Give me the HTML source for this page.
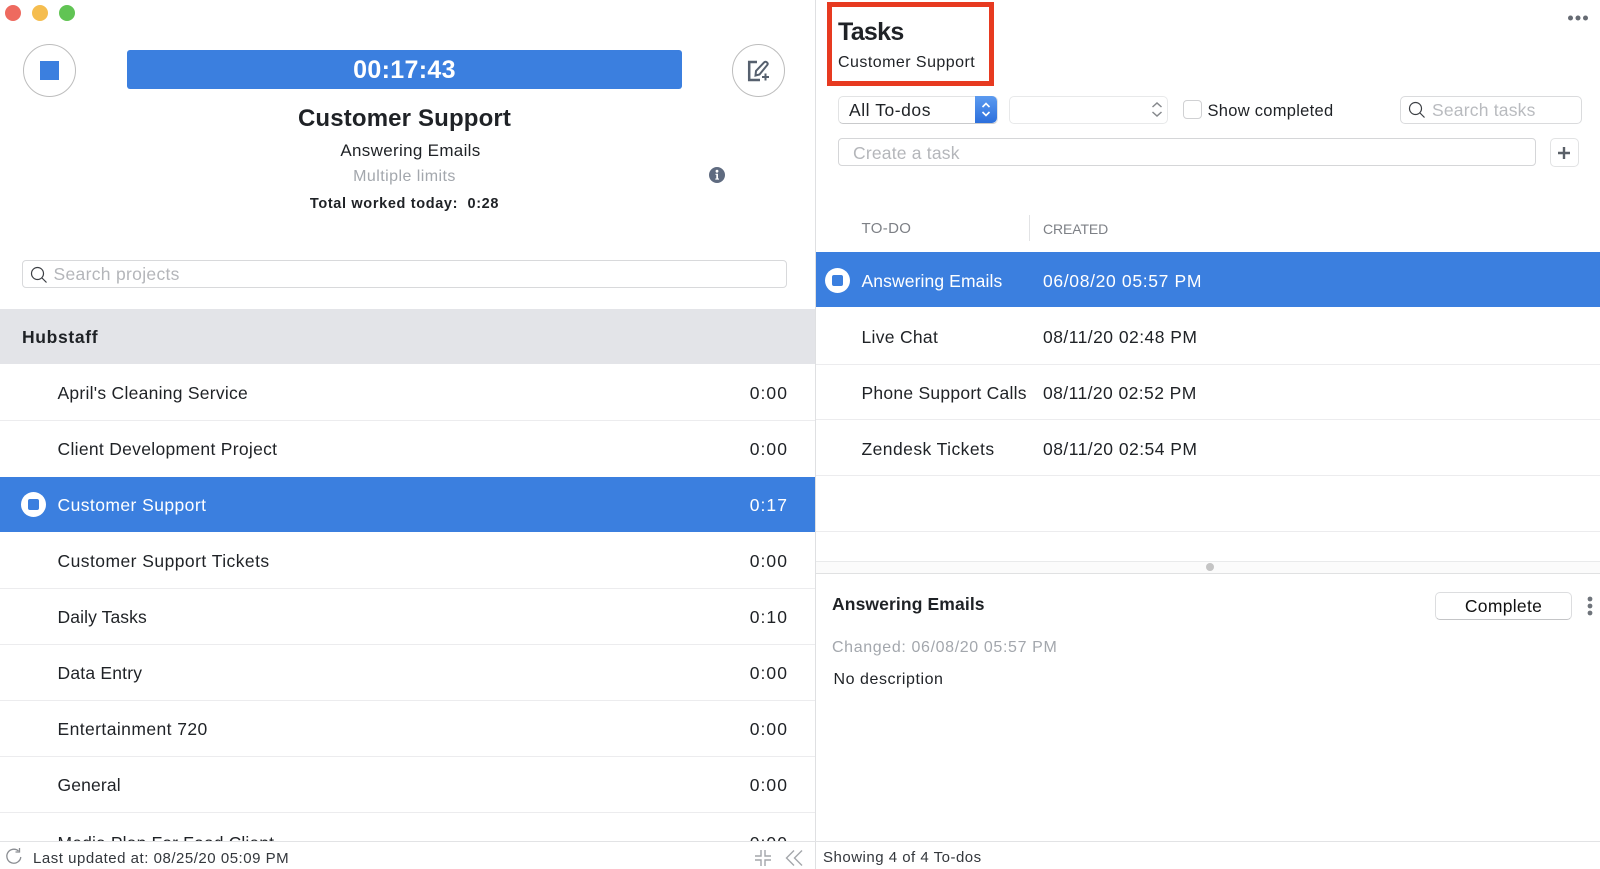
<!DOCTYPE html>
<html><head><meta charset="utf-8"><style>
html,body{margin:0;padding:0;background:#fff;width:1600px;height:869px;overflow:hidden}
body{font-family:"Liberation Sans",sans-serif;color:#1f2226;position:relative}
.t{position:absolute;white-space:nowrap;line-height:20px;font-size:17.5px;letter-spacing:.3px}
.n{right:812px;letter-spacing:1.05px}
.b{position:absolute}
.l{position:absolute;height:1px;background:#ececee}
.g{color:#a3a7ad}
</style></head><body>
<div class="b" style="left:5px;top:5px;width:16px;height:16px;border-radius:50%;background:#ee6a5f"></div>
<div class="b" style="left:32px;top:5px;width:16px;height:16px;border-radius:50%;background:#f5bd4f"></div>
<div class="b" style="left:59px;top:5px;width:16px;height:16px;border-radius:50%;background:#61c454"></div>
<div class="b" style="left:23px;top:44px;width:51px;height:51px;border:1px solid #bdbdbd;border-radius:50%"></div>
<div class="b" style="left:40px;top:61px;width:19px;height:19px;background:#3b7fdf"></div>
<div class="b" style="left:127px;top:50px;width:555px;height:39px;background:#3b7fdf;border-radius:3px"></div>
<div class="t" style="left:127px;width:555px;text-align:center;top:60px;font-size:25px;font-weight:bold;color:#fff;letter-spacing:.35px">00:17:43</div>
<div class="t" style="left:0;width:809px;text-align:center;top:109px;font-size:24px;font-weight:bold;letter-spacing:.15px">Customer Support</div>
<div class="t" style="left:0;width:821px;text-align:center;top:140.5px;font-size:17px;letter-spacing:.32px">Answering Emails</div>
<div class="t g" style="left:0;width:809px;text-align:center;top:167px;font-size:16px;letter-spacing:.45px">Multiple limits</div>
<div class="t" style="left:0;width:809px;text-align:center;top:193.5px;font-size:14.5px;font-weight:bold;letter-spacing:.65px;white-space:pre">Total worked today:  0:28</div>
<svg class="b" style="left:708px;top:166px" width="18" height="18" viewBox="0 0 18 18"><circle cx="9" cy="9" r="8" fill="#5f6b80"/><circle cx="9" cy="5.2" r="1.4" fill="#fff"/><path d="M7.5 7.8H10V12.5H11V13.6H7.3V12.5H8.3V8.9H7.5Z" fill="#fff"/></svg>
<div class="b" style="left:732px;top:44px;width:51px;height:51px;border:1px solid #bdbdbd;border-radius:50%"></div>
<svg class="b" style="left:745px;top:57px" width="28" height="28" viewBox="0 0 28 28" fill="none" stroke="#56606e"><path d="M12 5H4.2V23H15" stroke-width="2.5"/><path d="M10.5 18.5L11 14L19 5.5C20 4.5 21 4.5 22 5.5C23 6.5 23 7.3 22 8.3L14.5 17.5Z" stroke-width="2"/><path d="M20.5 16.5V23.5M17 20H24" stroke-width="2"/></svg>
<div class="b" style="left:22px;top:260px;width:763px;height:26px;border:1px solid #d8d9db;border-radius:4px"></div>
<svg class="b" style="left:29px;top:265px" width="20" height="20" viewBox="0 0 20 20" fill="none" stroke="#3c3f44" stroke-width="1.2"><circle cx="8.5" cy="8.5" r="6"/><path d="M13 13L17.5 17.5"/></svg>
<div class="t" style="left:53.5px;top:264px;color:#b4b6ba;font-size:17.5px;letter-spacing:.31px">Search projects</div>

<div class="b" style="left:815px;top:0;width:1px;height:869px;background:#dfe0e2"></div>
<div class="b" style="left:0;top:309px;width:815px;height:55px;background:#e3e4e8"></div>
<div class="t" style="left:22px;top:327px;font-weight:bold;font-size:17.5px;letter-spacing:.65px">Hubstaff</div>
<div class="b" style="left:0;top:477px;width:815px;height:55px;background:#3b7fdf"></div>
<div class="b" style="left:21px;top:492px;width:25px;height:25px;border-radius:50%;background:#fff"></div>
<div class="b" style="left:28px;top:499px;width:11px;height:11px;border-radius:2px;background:#3b7fdf"></div>
<div class="l" style="left:0;top:420px;width:815px"></div>
<div class="l" style="left:0;top:588px;width:815px"></div>
<div class="l" style="left:0;top:644px;width:815px"></div>
<div class="l" style="left:0;top:700px;width:815px"></div>
<div class="l" style="left:0;top:756px;width:815px"></div>
<div class="l" style="left:0;top:812px;width:815px"></div>
<div class="t" style="left:57.5px;top:383px;letter-spacing:.26px">April's Cleaning Service</div><div class="t n" style="top:383px">0:00</div>
<div class="t" style="left:57.5px;top:439px">Client Development Project</div><div class="t n" style="top:439px">0:00</div>
<div class="t" style="left:57.5px;top:495px;color:#fff;letter-spacing:.43px">Customer Support</div><div class="t n" style="top:495px;color:#fff">0:17</div>
<div class="t" style="left:57.5px;top:551px;letter-spacing:.45px">Customer Support Tickets</div><div class="t n" style="top:551px">0:00</div>
<div class="t" style="left:57.5px;top:607px;letter-spacing:.11px">Daily Tasks</div><div class="t n" style="top:607px">0:10</div>
<div class="t" style="left:57.5px;top:663px;letter-spacing:.2px">Data Entry</div><div class="t n" style="top:663px">0:00</div>
<div class="t" style="left:57.5px;top:719px;letter-spacing:.42px">Entertainment 720</div><div class="t n" style="top:719px">0:00</div>
<div class="t" style="left:57.5px;top:775px;letter-spacing:.15px">General</div><div class="t n" style="top:775px">0:00</div>
<div class="t" style="left:57.5px;top:833px;letter-spacing:.14px">Media Plan For Food Client</div><div class="t n" style="top:833px">0:00</div>
<div class="b" style="left:0;top:841px;width:1600px;height:28px;background:#fff"></div>
<div class="b" style="left:0;top:841px;width:1600px;height:1px;background:#e2e3e5"></div>
<div class="b" style="left:815px;top:842px;width:1px;height:27px;background:#dfe0e2"></div>
<svg class="b" style="left:5px;top:847px" width="18" height="18" viewBox="0 0 18 18" fill="none" stroke="#8a8d92" stroke-width="1.3"><path d="M13.5 4A7 7 0 1 0 15.8 10"/><path d="M14.5 1V5H10.5"/></svg>
<div class="t" style="left:33px;top:849px;font-size:15px;color:#33373c;letter-spacing:.52px">Last updated at: 08/25/20 05:09 PM</div>
<svg class="b" style="left:754px;top:849px" width="18" height="18" viewBox="0 0 18 18" fill="none" stroke="#a3a6aa" stroke-width="1.4"><path d="M1 7H7V1M11 1V7H17M1 11H7V17M11 17V11H17"/></svg>
<svg class="b" style="left:784px;top:849px" width="20" height="18" viewBox="0 0 20 18" fill="none" stroke="#a3a6aa" stroke-width="1.4"><path d="M10 1.5L2.5 9L10 16.5M18 1.5L10.5 9L18 16.5"/></svg>
<div class="t" style="left:823px;top:848px;font-size:15px;color:#33373c;letter-spacing:.5px">Showing 4 of 4 To-dos</div>

<div class="b" style="left:827px;top:2px;width:157px;height:74px;border:5.5px solid #e73a20"></div>
<div class="t" style="left:838px;top:22px;font-size:25px;font-weight:bold;letter-spacing:-.7px">Tasks</div>
<div class="t" style="left:838px;top:53px;font-size:16px;letter-spacing:.46px">Customer Support</div>
<svg class="b" style="left:1566px;top:13px" width="24" height="10"><circle cx="4.5" cy="5" r="2.5" fill="#666b73"/><circle cx="12" cy="5" r="2.5" fill="#666b73"/><circle cx="19.5" cy="5" r="2.5" fill="#666b73"/></svg>

<div class="b" style="left:838px;top:96px;width:158px;height:26px;border:1px solid #e2e3e4;border-bottom-color:#c9cacc;border-radius:5px"></div>
<div class="b" style="left:975px;top:96px;width:22px;height:27px;border-radius:0 5px 5px 0;background:linear-gradient(#5c9bf0,#2c6fdc)"></div>
<svg class="b" style="left:975px;top:96px" width="22" height="27" fill="none" stroke="#fff" stroke-width="1.6"><path d="M7.5 11L11 7.5L14.5 11M7.5 16L11 19.5L14.5 16"/></svg>
<div class="t" style="left:849px;top:100px;font-size:17.5px;letter-spacing:.55px">All To-dos</div>
<div class="b" style="left:1009px;top:96px;width:157px;height:26px;border:1px solid #e8e9ea;border-radius:5px"></div>
<svg class="b" style="left:1147px;top:96px" width="20" height="27" fill="none" stroke="#85888c" stroke-width="1.5"><path d="M5.5 11L10 7L14.5 11M5.5 16L10 20L14.5 16"/></svg>
<div class="b" style="left:1183px;top:100px;width:17px;height:17px;border:1px solid #d0d1d3;border-radius:4px"></div>
<div class="t" style="left:1207.5px;top:101px;font-size:16.5px;letter-spacing:.28px">Show completed</div>
<div class="b" style="left:1400px;top:96px;width:180px;height:26px;border:1px solid #dadbdd;border-radius:5px"></div>
<svg class="b" style="left:1407px;top:100px" width="20" height="20" viewBox="0 0 20 20" fill="none" stroke="#3c3f44" stroke-width="1.2"><circle cx="8.5" cy="8.5" r="6"/><path d="M13 13L17.5 17.5"/></svg>
<div class="t" style="left:1432px;top:100px;color:#b9bbbf;font-size:17.5px;letter-spacing:.2px">Search tasks</div>
<div class="b" style="left:838px;top:138px;width:696px;height:26px;border:1px solid #d5d6d8;border-radius:4px"></div>
<div class="t" style="left:853px;top:143px;color:#b4b6ba;font-size:17.5px;letter-spacing:.2px">Create a task</div>
<div class="b" style="left:1550px;top:138px;width:27px;height:27px;border:1px solid #e2e3e4;border-radius:5px"></div>
<svg class="b" style="left:1557px;top:146px" width="14" height="14" fill="none" stroke="#5a6068" stroke-width="2.4"><path d="M7 1V13M1 7H13"/></svg>

<div class="t" style="left:861.5px;top:218.5px;font-size:15px;color:#7d8086;letter-spacing:.35px">TO-DO</div>
<div class="b" style="left:1029px;top:215px;width:1px;height:26px;background:#e2e3e5"></div>
<div class="t" style="left:1043px;top:218.5px;font-size:14px;color:#7d8086;letter-spacing:-.1px">CREATED</div>
<div class="b" style="left:816px;top:252px;width:784px;height:55px;background:#3b7fdf"></div>
<div class="b" style="left:825px;top:268px;width:25px;height:25px;border-radius:50%;background:#fff"></div>
<div class="b" style="left:832px;top:275px;width:11px;height:11px;border-radius:2px;background:#3b7fdf"></div>
<div class="t" style="left:861.5px;top:271px;color:#fff;letter-spacing:.11px">Answering Emails</div><div class="t" style="left:1043px;top:271px;color:#fff;letter-spacing:.66px">06/08/20 05:57 PM</div>
<div class="t" style="left:861.5px;top:327px">Live Chat</div><div class="t" style="left:1043px;top:327px;letter-spacing:.46px">08/11/20 02:48 PM</div>
<div class="t" style="left:861.5px;top:383px;letter-spacing:.25px">Phone Support Calls</div><div class="t" style="left:1043px;top:383px;letter-spacing:.42px">08/11/20 02:52 PM</div>
<div class="t" style="left:861.5px;top:439px;letter-spacing:.44px">Zendesk Tickets</div><div class="t" style="left:1043px;top:439px;letter-spacing:.46px">08/11/20 02:54 PM</div>
<div class="l" style="left:816px;top:364px;width:784px"></div>
<div class="l" style="left:816px;top:419px;width:784px"></div>
<div class="l" style="left:816px;top:475px;width:784px"></div>
<div class="l" style="left:816px;top:531px;width:784px"></div>
<div class="b" style="left:816px;top:561px;width:784px;height:13px;background:#fbfbfb;border-top:1px solid #e9eaeb;border-bottom:1px solid #e0e1e2;box-sizing:border-box"></div>
<div class="b" style="left:1206px;top:563px;width:8px;height:8px;border-radius:50%;background:#c4c4c4"></div>
<div class="t" style="left:832px;top:594px;font-weight:bold;font-size:17.5px;letter-spacing:.12px">Answering Emails</div>
<div class="b" style="left:1435px;top:592px;width:135px;height:26px;border:1px solid #dcdddf;border-bottom-color:#c4c5c7;border-radius:5px"></div>
<div class="t" style="left:1435px;width:137px;text-align:center;top:596px;font-size:17.5px;color:#111">Complete</div>
<svg class="b" style="left:1586px;top:594px" width="8" height="24"><circle cx="4" cy="5" r="2.4" fill="#6f747b"/><circle cx="4" cy="12" r="2.4" fill="#6f747b"/><circle cx="4" cy="19" r="2.4" fill="#6f747b"/></svg>
<div class="t g" style="left:832px;top:637.5px;font-size:16px;letter-spacing:.63px">Changed: 06/08/20 05:57 PM</div>
<div class="t" style="left:833.5px;top:670px;font-size:16px;letter-spacing:.55px">No description</div>
</body></html>
